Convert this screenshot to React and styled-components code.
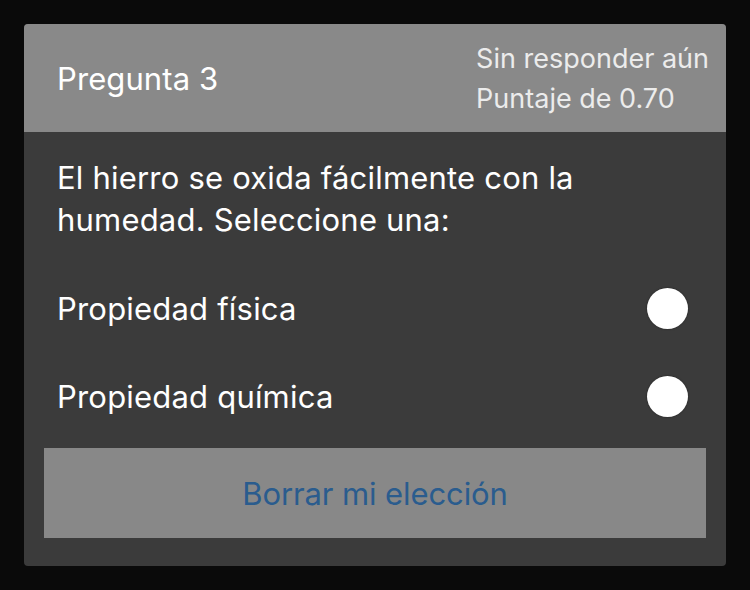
import React from "react";
import styled, { createGlobalStyle } from "styled-components";

const Global = createGlobalStyle`
  html, body { margin: 0; padding: 0; background: #0a0a0a; }
  body { font-family: Inter, Roboto, sans-serif; }
`;

const Page = styled.div`
  width: 750px;
  height: 590px;
  background: #0a0a0a;
  padding: 24px;
  box-sizing: border-box;
`;

const Card = styled.div`
  width: 702px;
  height: 542px;
  background: #3b3b3b;
  border-radius: 4px;
  overflow: hidden;
  display: flex;
  flex-direction: column;
`;

const Header = styled.div`
  height: 108px;
  background: #898989;
  display: flex;
  align-items: center;
  justify-content: space-between;
  padding: 0 17px 0 33px;
  flex-shrink: 0;
`;

const Title = styled.div`
  color: #ffffff;
  font-size: 31px;
  letter-spacing: 0.1px;
`;

const Meta = styled.div`
  color: #ececec;
  font-size: 27px;
  line-height: 40px;
  padding-top: 2px;
`;

const Body = styled.div`
  padding: 25px 20px 28px;
  display: flex;
  flex-direction: column;
  flex: 1;
`;

const Question = styled.div`
  color: #ffffff;
  font-size: 31px;
  line-height: 42px;
  letter-spacing: 0.2px;
  padding: 0 13px;
  margin-bottom: 23px;
`;

const Option = styled.div`
  height: 88px;
  display: flex;
  align-items: center;
  justify-content: space-between;
  padding: 0 18px 0 13px;
`;

const Label = styled.span`
  color: #ffffff;
  font-size: 31px;
  letter-spacing: 0.2px;
`;

const Radio = styled.span`
  width: 41px;
  height: 41px;
  border-radius: 50%;
  background: #ffffff;
  box-shadow: 0 0 2px rgba(0, 0, 0, 0.5);
`;

const ClearButton = styled.button`
  margin-top: 8px;
  height: 90px;
  border: none;
  background: #888888;
  color: #2a5c8e;
  font-family: Inter, Roboto, sans-serif;
  font-size: 31px;
  letter-spacing: -0.1px;
  display: flex;
  align-items: center;
  justify-content: center;
  cursor: pointer;
`;

export default function App() {
  return (
    <>
      <Global />
      <Page>
        <Card>
          <Header>
            <Title>Pregunta 3</Title>
            <Meta>
              <div>Sin responder aún</div>
              <div>Puntaje de 0.70</div>
            </Meta>
          </Header>
          <Body>
            <Question>
              El hierro se oxida fácilmente con la
              <br />
              humedad. Seleccione una:
            </Question>
            <Option>
              <Label>Propiedad física</Label>
              <Radio />
            </Option>
            <Option>
              <Label>Propiedad química</Label>
              <Radio />
            </Option>
            <ClearButton>Borrar mi elección</ClearButton>
          </Body>
        </Card>
      </Page>
    </>
  );
}
